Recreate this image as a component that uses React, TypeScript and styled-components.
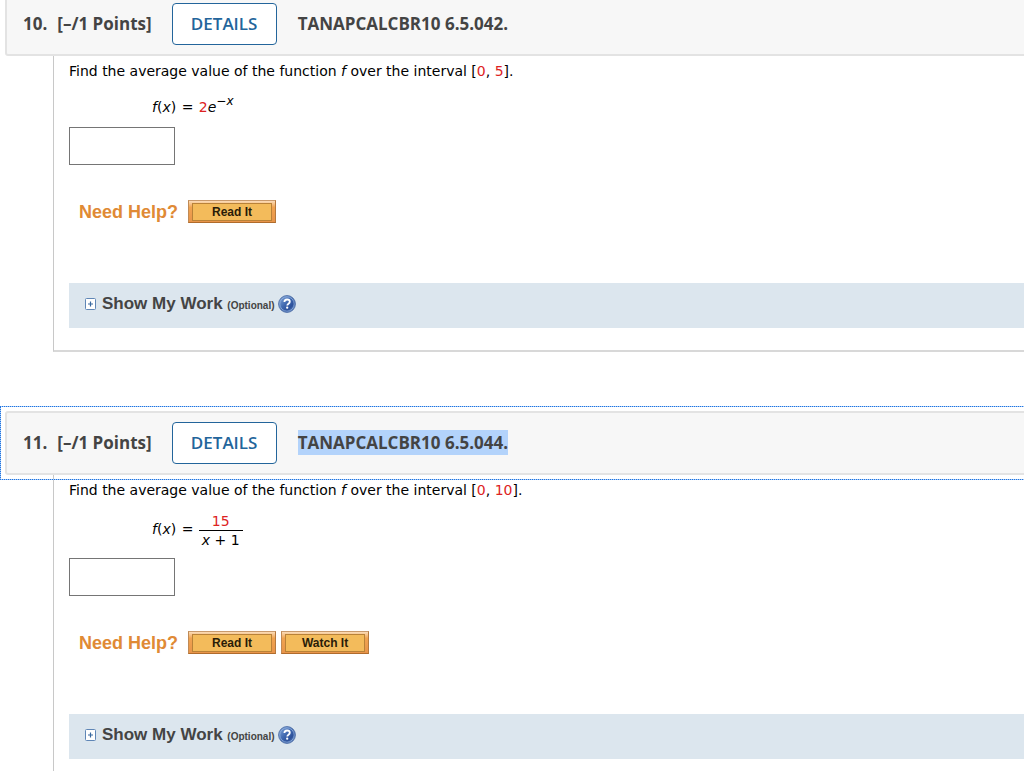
import React from "react";
import styled, { createGlobalStyle } from "styled-components";

const GlobalStyle = createGlobalStyle`
  *, *::before, *::after { box-sizing: border-box; }
  body { margin: 0; background: #fff; }
`;

const Page = styled.main`
  height: 100vh;
  overflow: hidden;
  color: #000;
  font: 14px/20px "DejaVu Sans", Verdana, sans-serif;
`;

const QuestionList = styled.div`
  display: flex;
  flex-direction: column;
  gap: 59px;
  margin: -8px -10px 0 0;
`;

const Header = styled.header<{ $focused?: boolean }>`
  position: relative;
  display: flex;
  align-items: center;
  height: 64px;
  margin-left: 5px;
  padding: 0 0 2px 16px;
  border: 2px solid #e3e3e3;
  border-radius: 3px;
  background: #f7f7f7;
  color: #444;
  font: 700 17px/25px "Open Sans", sans-serif;

  &::before,
  &::after {
    content: "";
    display: ${(p) => (p.$focused ? "block" : "none")};
    position: absolute;
    inset: -7px;
    border: 1px solid #a9cbf6;
    pointer-events: none;
  }

  &::after {
    border: 1px dotted #1f74e0;
  }
`;

const Points = styled.span`
  margin-left: 10px;
`;

const DetailsButton = styled.button`
  min-width: 105px;
  height: 42px;
  margin: 2px 21px 0 20px;
  padding: 0 18px 2px;
  border: 1px solid #23659b;
  border-radius: 4px;
  background: #fff;
  color: #23659b;
  font: 600 17px/25px "Open Sans", sans-serif;
`;

const Code = styled.h2<{ $selected?: boolean }>`
  margin: 0;
  font: inherit;
  background: ${(p) => (p.$selected ? "#b3d3fb" : "transparent")};
`;

const Body = styled.div`
  margin-left: 53px;
  padding: 5px 0 22px 15px;
  border: solid #c8c8c8;
  border-width: 0 0 2px 1px;
  border-bottom-color: #d8d8d8;
`;

const Prompt = styled.p`
  margin: 0;
`;

const Red = styled.span`
  color: #dd2222;
`;

const Formula = styled.div`
  display: flex;
  align-items: center;
  min-height: 36px;
  margin: 8px 0 0 83px;
  white-space: pre;
`;

const Equals = styled.span`
  margin: 0 1px;
`;

const Exponent = styled.sup`
  font-size: 12px;
  line-height: 0;
  vertical-align: 7px;
`;

const Fraction = styled.span`
  display: flex;
  flex-direction: column;
  align-items: center;
  margin-top: 4px;
  line-height: 18px;
`;

const Denominator = styled.span`
  padding: 0 3px;
  border-top: 1px solid #000;
`;

const Answer = styled.input<{ $gap: number }>`
  display: block;
  width: 106px;
  height: 38px;
  margin-top: ${(p) => p.$gap}px;
  padding: 0 8px;
  border: 1px solid #757575;
  border-radius: 0;
  background: #fff;
  font: inherit;
`;

const Help = styled.div`
  display: flex;
  align-items: center;
  gap: 5px;
  margin: 35px 0 60px;
  padding-left: 10px;
`;

const HelpLabel = styled.span`
  margin-right: 5px;
  color: #e08a35;
  font: 700 18px/22px "Liberation Sans", Arial, sans-serif;
`;

const HelpButton = styled.button`
  width: 88px;
  height: 23px;
  padding: 2px 3px;
  border: 1px solid;
  border-color: #c99a6c #b5793e #b06c2c #c08a55;
  background: linear-gradient(#fbdcb8, #f0a350 30%, #e8944a);
  font: 700 12px/15px "Liberation Sans", Arial, sans-serif;
  color: #2a1c08;
`;

const HelpFace = styled.span`
  display: block;
  padding-top: 1px;
  border: 1px solid #b98238;
  background: #f3bb5b;
`;

const WorkBar = styled.section`
  display: flex;
  align-items: center;
  height: 45px;
  padding: 0 0 4px 16px;
  background: #dce6ee;
  color: #444;
  font: 700 17px/22px "Liberation Sans", Arial, sans-serif;
`;

const IconButton = styled.button`
  display: flex;
  padding: 0;
  border: 0;
  background: none;
`;

const WorkTitle = styled.span`
  margin: 0 3px 0 6px;
  padding-top: 2px;
`;

const Optional = styled.small`
  font-size: 10px;
`;

function PlusIcon() {
  return (
    <svg width="11" height="12" viewBox="0 0 11 12">
      <rect x="0.5" y="0.5" width="10" height="11" rx="1" fill="#fff" stroke="#5f86b6" />
      <path d="M3 6h5M5.5 3.5v5" stroke="#38689f" strokeWidth="1.2" />
    </svg>
  );
}

function QuestionIcon({ id }: { id: string }) {
  return (
    <svg width="18" height="18" viewBox="0 0 18 18">
      <defs>
        <linearGradient id={id} x1="0" y1="0" x2="1" y2="1">
          <stop offset="0" stopColor="#8db0e0" />
          <stop offset="0.45" stopColor="#4169b0" />
          <stop offset="0.7" stopColor="#2c509a" />
          <stop offset="1" stopColor="#7fa4d8" />
        </linearGradient>
      </defs>
      <circle cx="9" cy="9" r="8.4" fill={`url(#${id})`} stroke="#5877ac" />
      <circle cx="9" cy="9" r="7.2" fill="none" stroke="#8fb0de" strokeWidth="0.8" />
      <path
        d="M6.4 7.1C6.4 5.3 7.5 4.5 9.1 4.5s2.7.9 2.7 2.3c0 1.9-2.5 1.9-2.5 3.6"
        fill="none"
        stroke="#fff"
        strokeWidth="1.8"
      />
      <circle cx="9.2" cy="12.7" r="1.15" fill="#fff" />
    </svg>
  );
}

interface QuestionProps {
  number: number;
  code: string;
  upper: string;
  helps: string[];
  active?: boolean;
  answerGap?: number;
  children: React.ReactNode;
}

function Question({ number, code, upper, helps, active, answerGap = 2, children }: QuestionProps) {
  return (
    <article>
      <Header $focused={active}>
        <span>{number}.</span>
        <Points>[–/1 Points]</Points>
        <DetailsButton type="button">DETAILS</DetailsButton>
        <Code $selected={active}>{code}</Code>
      </Header>
      <Body>
        <Prompt>
          Find the average value of the function <i>f</i> over the interval [<Red>0</Red>, <Red>{upper}</Red>].
        </Prompt>
        <Formula>{children}</Formula>
        <Answer type="text" aria-label={`Answer to question ${number}`} $gap={answerGap} />
        <Help>
          <HelpLabel>Need Help?</HelpLabel>
          {helps.map((label) => (
            <HelpButton type="button" key={label}>
              <HelpFace>{label}</HelpFace>
            </HelpButton>
          ))}
        </Help>
        <WorkBar>
          <IconButton type="button" aria-label="Expand">
            <PlusIcon />
          </IconButton>
          <WorkTitle>
            Show My Work <Optional>(Optional)</Optional>
          </WorkTitle>
          <IconButton type="button" aria-label="Help">
            <QuestionIcon id={`orb-${number}`} />
          </IconButton>
        </WorkBar>
      </Body>
    </article>
  );
}

export default function App() {
  return (
    <Page>
      <GlobalStyle />
      <QuestionList>
        <Question number={10} code="TANAPCALCBR10 6.5.042." upper="5" helps={["Read It"]}>
          <span>
            <i>f</i>(<i>x</i>) <Equals>=</Equals> <Red>2</Red>
            <i>e</i>
            <Exponent>
              −<i>x</i>
            </Exponent>
          </span>
        </Question>
        <Question
          number={11}
          code="TANAPCALCBR10 6.5.044."
          upper="10"
          helps={["Read It", "Watch It"]}
          active
          answerGap={9}
        >
          <span>
            <i>f</i>(<i>x</i>) <Equals>=</Equals>{" "}
          </span>
          <Fraction>
            <Red>15</Red>
            <Denominator>
              <i>x</i> + 1
            </Denominator>
          </Fraction>
        </Question>
      </QuestionList>
    </Page>
  );
}
